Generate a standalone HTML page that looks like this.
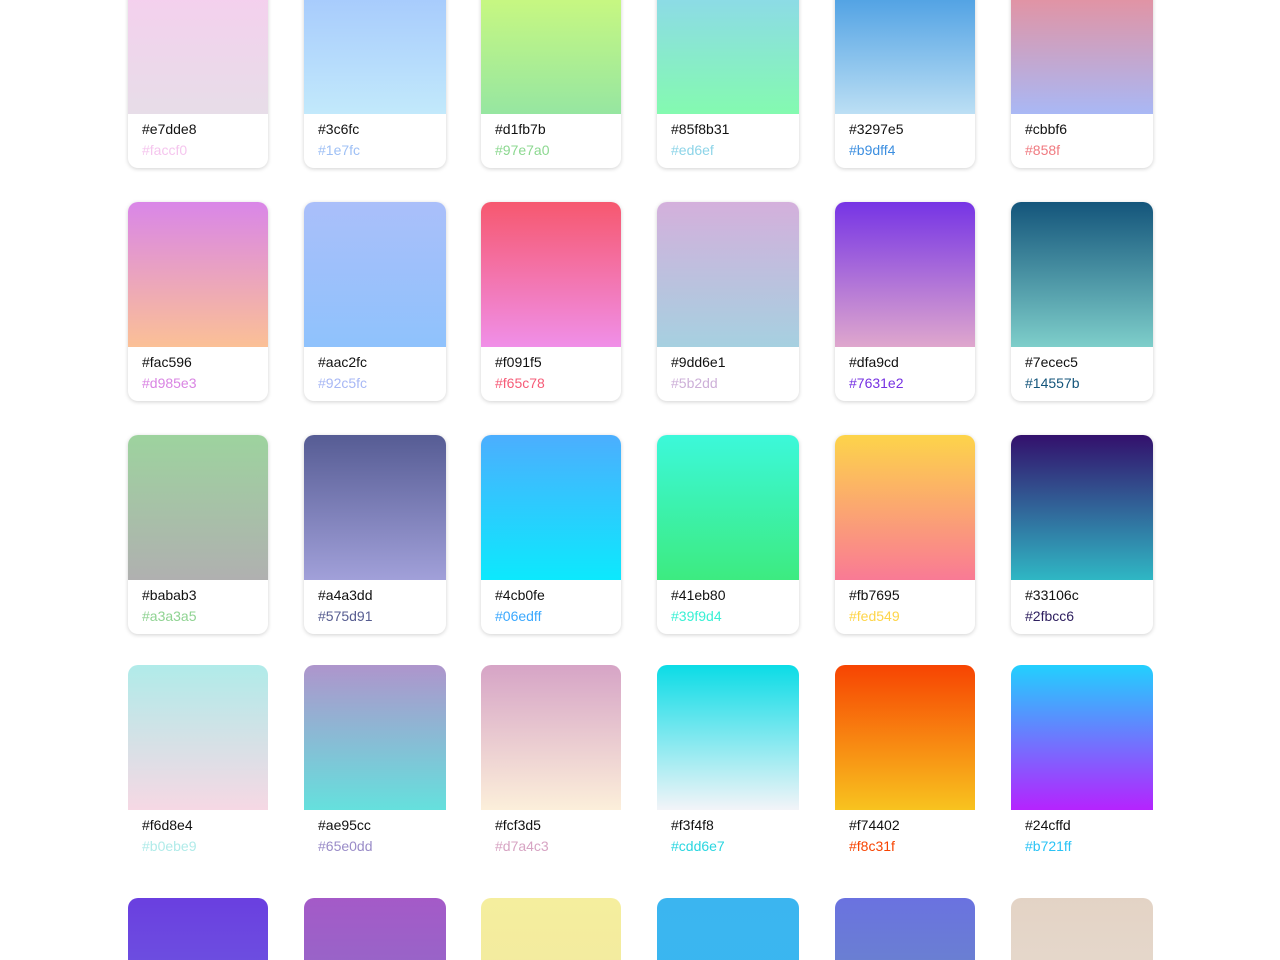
<!DOCTYPE html>
<html><head><meta charset="utf-8"><style>
html,body{margin:0;background:#fff;width:1280px;height:960px;overflow:hidden}
body{position:relative;font-family:"Liberation Sans",sans-serif}
.c{position:absolute;width:140px;height:199px;border-radius:10px;background:#fff;box-shadow:0 1px 4px rgba(0,0,0,.18);overflow:hidden}
.c.ns{box-shadow:none}
.g{height:145px}
.t{position:absolute;left:14px;top:150px;font-size:14px;line-height:21px;color:#111}
</style></head><body>
<div id="w"></div>
<script>
var cols=[128,304,481,657,835,1011];
var tops=[-31,202,435,665,898];
var d=[
[["#f7cdef","#e7dde8","#e7dde8","#faccf0","#f5c6ee"],["#a1c4fd","#c2e9fb","#3c6fc","#1e7fc","#9fc0f5"],["#d4fc79","#96e6a1","#d1fb7b","#97e7a0","#8cd890"],["#8fd3f4","#84fab0","#85f8b31","#ed6ef","#8dd4e8"],["#3793e0","#bcdff4","#3297e5","#b9dff4","#3d8fe0"],["#f08a8f","#a9b8f5","#cbbf6","#858f","#f07a80"]],
[["#d986e8","#fbc096","#fac596","#d985e3","#d985e3"],["#aabffa","#8fc2fc","#aac2fc","#92c5fc","#a8b8f5"],["#f6586f","#f08fe8","#f091f5","#f65c78","#f65c78"],["#d4b0dc","#a6d0e0","#9dd6e1","#5b2dd","#cdb0d8"],["#7634e5","#dfa7cd","#dfa9cd","#7631e2","#7631e2"],["#14557b","#7ececa","#7ecec5","#14557b","#14557b"]],
[["#9dd39e","#b0b0b0","#babab3","#a3a3a5","#8fd392"],["#565c94","#a1a0d9","#a4a3dd","#575d91","#575d91"],["#4caefe","#0ce9fd","#4cb0fe","#06edff","#3ba8fe"],["#3cf8da","#3deb80","#41eb80","#39f9d4","#39f0d4"],["#fdd44a","#f97a95","#fb7695","#fed549","#fed549"],["#33106c","#2fb7c4","#33106c","#2fbcc6","#2f2060"]],
[["#b0ebe9","#f6d8e4","#f6d8e4","#b0ebe9","#b0ebe9"],["#ae95cc","#65e0dd","#ae95cc","#65e0dd","#9a8cc8"],["#d6a4c6","#fcefda","#fcf3d5","#d7a4c3","#d7a4c3"],["#0bdce6","#f3f4f8","#f3f4f8","#cdd6e7","#2bd6e0"],["#f74402","#f8c31f","#f74402","#f8c31f","#f74402"],["#22d0fe","#b523fe","#24cffd","#b721ff","#2bc3f5"]],
[["#6a3fe0","#7060e0","",""],["#a45ac8","#8a70c8","",""],["#f5ee9e","#f0e8a0","",""],["#3bb5f0","#3ab8f0","",""],["#6a72e0","#6a90c0","",""],["#e3d3c5","#e8ddd2","",""]]
];
var h="";
for(var r=0;r<5;r++)for(var i=0;i<6;i++){var x=d[r][i];
h+='<div class="c'+(r>=3?' ns':'')+'" style="left:'+cols[i]+'px;top:'+tops[r]+'px;width:'+((i%2)?142:140)+'px'+(r==4?';height:62px;border-radius:10px 10px 0 0':'')+'"><div class="g" style="background:linear-gradient(180deg,'+x[0]+','+x[1]+')"></div>'+(x[2]?'<div class="t">'+x[2]+'<br><span style="color:'+x[4]+'">'+x[3]+'</span></div>':'')+'</div>';}
document.getElementById("w").innerHTML=h;
</script>
</body></html>
